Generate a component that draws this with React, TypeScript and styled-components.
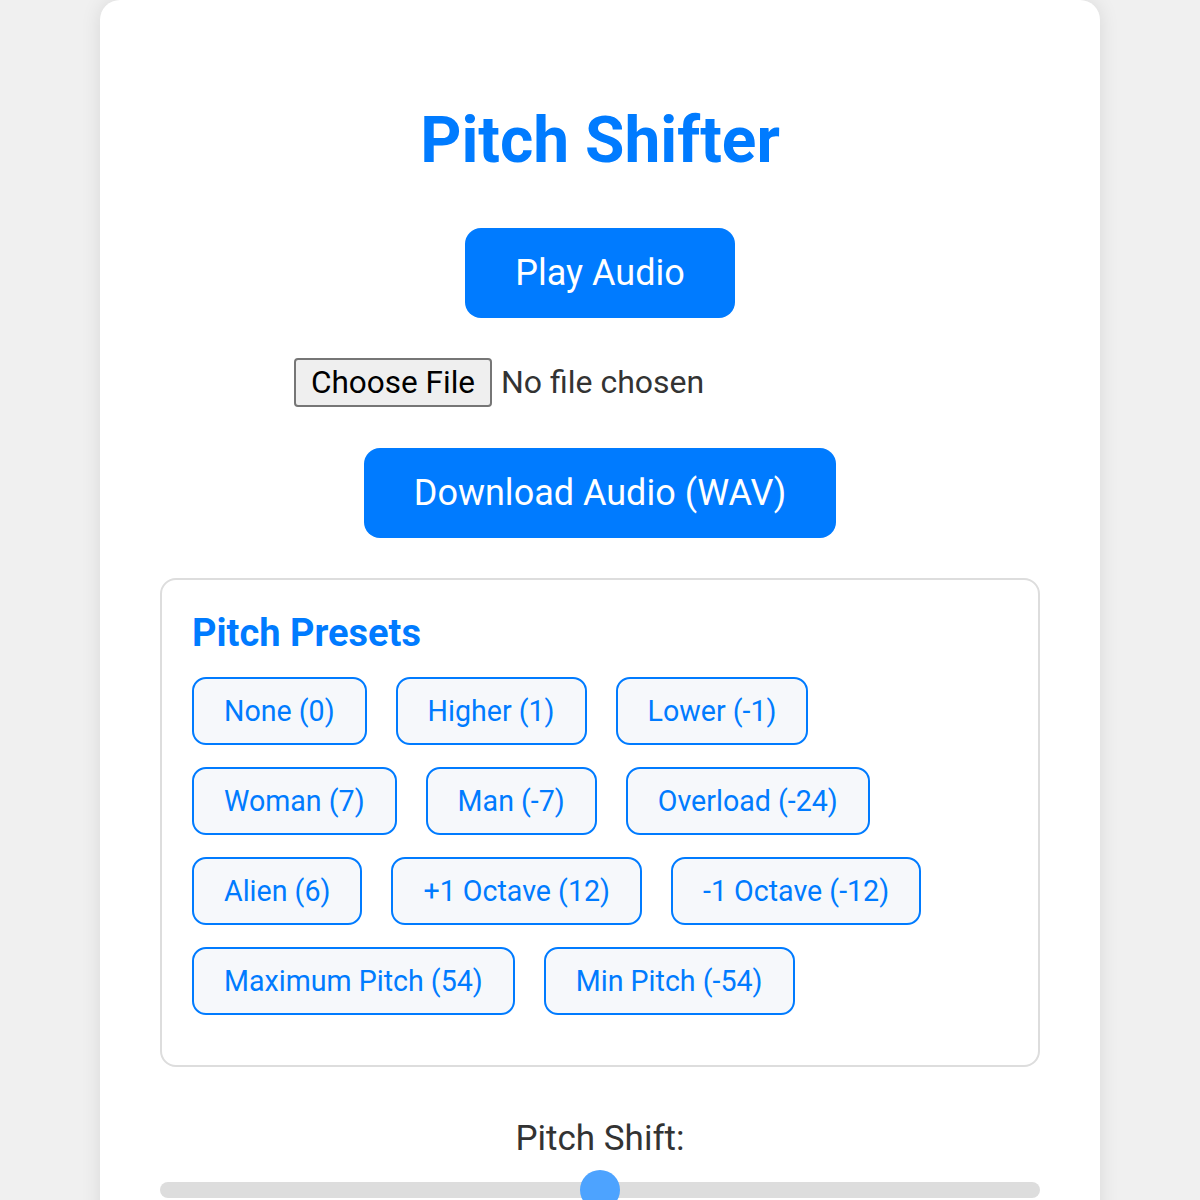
import React, { useState } from 'react';
import styled, { createGlobalStyle } from 'styled-components';

const GlobalStyle = createGlobalStyle`
  html, body {
    margin: 0;
    padding: 0;
    background: #f0f0f0;
    font-family: Roboto, "Liberation Sans", Arial, sans-serif;
  }
  * { box-sizing: border-box; }
`;

const Card = styled.main`
  width: 1000px;
  margin: 0 auto;
  background: #fff;
  border-radius: 20px;
  box-shadow: 0 0 20px rgba(0, 0, 0, 0.1);
  padding: 103px 60px 60px;
  display: flex;
  flex-direction: column;
  align-items: center;
`;

const Title = styled.h1`
  margin: 0;
  font-size: 64px;
  line-height: 76px;
  font-weight: 700;
  color: #007bff;
`;

const MainButton = styled.button<{ top: number }>`
  margin-top: ${(p) => p.top}px;
  height: 90px;
  padding: 0 50px;
  border: none;
  border-radius: 16px;
  background: #007bff;
  color: #fff;
  font-family: inherit;
  font-size: 36px;
  cursor: pointer;
`;

const FileInput = styled.input`
  margin-top: 40px;
  width: 612px;
  height: 49px;
  font-family: inherit;
  font-size: 32px;
  color: #333;

  &::file-selector-button {
    font-family: inherit;
    font-size: 31.5px;
    color: #000;
    height: 49px;
    padding: 0 15px;
    margin-right: 9px;
    background: #efefef;
    border: 2px solid #767676;
    border-radius: 4px;
  }
`;

const PresetBox = styled.section`
  align-self: stretch;
  margin-top: 40px;
  border: 2px solid #ddd;
  border-radius: 16px;
  padding: 31px 30px 50px;
`;

const PresetHeading = styled.h3`
  margin: 0;
  font-size: 38px;
  line-height: 44px;
  font-weight: 700;
  color: #007bff;
`;

const PresetGrid = styled.div`
  margin-top: 22px;
  display: flex;
  flex-direction: column;
  row-gap: 22px;
`;

const Row = styled.div`
  display: flex;
  column-gap: 29px;
`;

const PresetButton = styled.button`
  height: 68px;
  padding: 0 30px;
  border: 2px solid #007bff;
  border-radius: 14px;
  background: #f6f8fb;
  color: #007bff;
  font-family: inherit;
  font-size: 28.6px;
  cursor: pointer;
`;

const Label = styled.label`
  margin-top: 52px;
  font-size: 35px;
  line-height: 40px;
  color: #333;
`;

const Slider = styled.input`
  -webkit-appearance: none;
  appearance: none;
  align-self: stretch;
  margin: 11px 0 0;
  height: 40px;
  background: transparent;

  &::-webkit-slider-runnable-track {
    height: 16px;
    border-radius: 8px;
    background: #ddd;
  }

  &::-webkit-slider-thumb {
    -webkit-appearance: none;
    width: 40px;
    height: 40px;
    margin-top: -12px;
    border-radius: 50%;
    background: #4da3ff;
    border: none;
  }
`;

const presetRows = [
  [['None', 0], ['Higher', 1], ['Lower', -1]],
  [['Woman', 7], ['Man', -7], ['Overload', -24]],
  [['Alien', 6], ['+1 Octave', 12], ['-1 Octave', -12]],
  [['Maximum Pitch', 54], ['Min Pitch', -54]],
] as [string, number][][];

export default function App() {
  const [pitch, setPitch] = useState(0);

  return (
    <>
      <GlobalStyle />
      <Card>
        <Title>Pitch Shifter</Title>
        <MainButton top={49}>Play Audio</MainButton>
        <FileInput type="file" accept="audio/*" />
        <MainButton top={41}>Download Audio (WAV)</MainButton>

        <PresetBox>
          <PresetHeading>Pitch Presets</PresetHeading>
          <PresetGrid>
            {presetRows.map((row, i) => (
              <Row key={i}>
                {row.map(([name, value]) => (
                  <PresetButton key={name} onClick={() => setPitch(value)}>
                    {name} ({value})
                  </PresetButton>
                ))}
              </Row>
            ))}
          </PresetGrid>
        </PresetBox>

        <Label htmlFor="pitch">Pitch Shift:</Label>
        <Slider
          id="pitch"
          type="range"
          min={-54}
          max={54}
          step={1}
          value={pitch}
          onChange={(e) => setPitch(Number(e.target.value))}
        />
      </Card>
    </>
  );
}
